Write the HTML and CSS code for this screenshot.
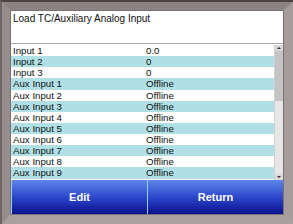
FILE: index.html
```html
<!DOCTYPE html>
<html lang="en">
<head>
    <meta charset="UTF-8">
    <title>Load TC/Auxiliary Analog Input</title>
    <link rel="stylesheet" href="styles.css">
</head>
<body>
    <div class="bezel">
        <div class="frame">
            <div class="screen">
                <div class="title">Load TC/Auxiliary Analog Input</div>
                <div class="list">
                    <div class="rows">
                        <div class="row"><span class="name">Input 1</span><span class="value">0.0</span></div>
                        <div class="row"><span class="name">Input 2</span><span class="value">0</span></div>
                        <div class="row"><span class="name">Input 3</span><span class="value">0</span></div>
                        <div class="row"><span class="name">Aux Input 1</span><span class="value">Offline</span></div>
                        <div class="row"><span class="name">Aux Input 2</span><span class="value">Offline</span></div>
                        <div class="row"><span class="name">Aux Input 3</span><span class="value">Offline</span></div>
                        <div class="row"><span class="name">Aux Input 4</span><span class="value">Offline</span></div>
                        <div class="row"><span class="name">Aux Input 5</span><span class="value">Offline</span></div>
                        <div class="row"><span class="name">Aux Input 6</span><span class="value">Offline</span></div>
                        <div class="row"><span class="name">Aux Input 7</span><span class="value">Offline</span></div>
                        <div class="row"><span class="name">Aux Input 8</span><span class="value">Offline</span></div>
                        <div class="row"><span class="name">Aux Input 9</span><span class="value">Offline</span></div>
                    </div>
                    <div class="scrollbar">
                        <div class="arrow up"></div>
                        <div class="thumb"></div>
                        <div class="track"></div>
                        <div class="arrow down"></div>
                    </div>
                </div>
                <div class="buttons">
                    <button class="btn">Edit</button>
                    <button class="btn">Return</button>
                </div>
            </div>
        </div>
    </div>
</body>
</html>
```

FILE: styles.css
```css
html,
body {
    margin: 0;
    padding: 0;
    font-family: "Liberation Sans", Arial, sans-serif;
}

.bezel {
    width: 293px;
    height: 224px;
    box-sizing: border-box;
    border-top: 2px solid #4a4444;
    border-left: 2px solid #6e6666;
    background: #a09696;
}

.frame {
    height: 100%;
    box-sizing: border-box;
    border-style: solid;
    border-width: 9px 10px 10px 9px;
    border-color: #8c8282 #a69c9c #aaa0a0 #978d8d;
}

.screen {
    display: flex;
    flex-direction: column;
    height: 100%;
    background: #ffffff;
    box-shadow: 0 0 0 1px #7a7272;
}

.title {
    height: 33px;
    box-sizing: border-box;
    padding: 2px 2px 0;
    font-size: 10px;
    color: #111;
    border-bottom: 1px solid #a8a8a8;
}

.list {
    display: flex;
    padding-top: 1px;
    height: 136px;
    box-sizing: border-box;
}

.rows {
    flex: 1;
}

.row {
    display: flex;
    height: 11.125px;
    line-height: 11px;
    font-size: 9.7px;
    color: #111;
    padding-left: 2px;
}

.row:nth-child(even) {
    background: #b0e0e6;
}

.name {
    width: 133px;
}

.scrollbar {
    width: 8px;
    display: flex;
    flex-direction: column;
    background: #e6e6e6;
    border-left: 1px solid #d0d0d0;
}

.arrow {
    height: 6px;
    background: #d8d8d8;
    position: relative;
}

.arrow::after {
    content: "";
    position: absolute;
    left: 2px;
    border-left: 2px solid transparent;
    border-right: 2px solid transparent;
}

.up::after {
    top: 2px;
    border-bottom: 2px solid #333;
}

.down::after {
    top: 2px;
    border-top: 2px solid #333;
}

.thumb {
    height: 50px;
    background: #c4c4c4;
}

.track {
    flex: 1;
}

.buttons {
    flex: 1;
    display: flex;
}

.btn {
    flex: 1;
    border: 0;
    border-left: 1px solid #8cd0ec;
    margin: 0;
    padding: 0;
    font-family: "Liberation Sans", Arial, sans-serif;
    font-size: 11px;
    font-weight: bold;
    color: #ffffff;
    background: linear-gradient(#5f86ea, #2c48cc 50%, #0a0f8c);
}
```
